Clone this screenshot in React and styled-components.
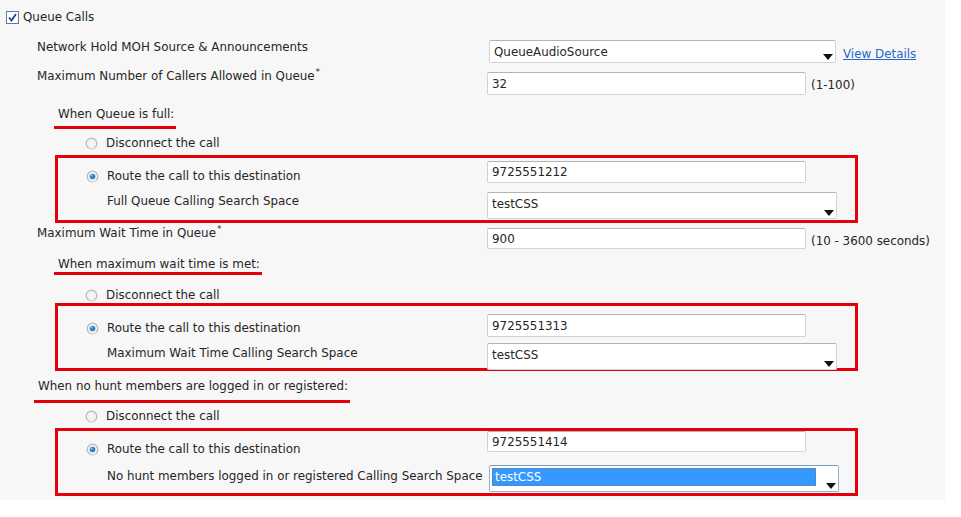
import React from 'react'
import styled, { createGlobalStyle } from 'styled-components'

const GlobalStyle = createGlobalStyle`
  body {
    margin: 0;
    background: #ffffff;
    font-family: "DejaVu Sans", Verdana, sans-serif;
    font-size: 11.9px;
    color: #262626;
  }
`

const RED = '#e3000b'

function Checkbox() {
  return (
    <svg width="13" height="13" viewBox="0 0 13 13">
      <rect x="0.5" y="0.5" width="12" height="12" fill="#fff" stroke="#5a7aa8" />
      <path d="M3 6.5 L5.5 9.5 L10 3" fill="none" stroke="#21409a" strokeWidth="1.8" />
    </svg>
  )
}

function Radio({ checked }) {
  return (
    <svg width="13" height="13" viewBox="0 0 13 13">
      <circle cx="6.5" cy="6.5" r="5.3" fill={checked ? '#eef2f6' : '#f4f4f4'} stroke="#b8b8b8" strokeWidth="1.2" />
      <path d="M3 9.5 A5 5 0 0 0 10 10" fill="none" stroke="#e6e6e6" strokeWidth="1.4" />
      {checked && <circle cx="6.5" cy="6.5" r="2.8" fill="#2d7fc4" />}
      {checked && <circle cx="5.6" cy="5.6" r="1" fill="#9fd0f5" />}
    </svg>
  )
}

function Arrow() {
  return (
    <svg width="10" height="6" viewBox="0 0 10 6">
      <path d="M0 0 L10 0 L5 6 Z" fill="#111" />
    </svg>
  )
}

export default function App() {
  return (
    <>
      <GlobalStyle />
      <Panel>
        <CheckLine>
          <Checkbox />
          <span>Queue Calls</span>
        </CheckLine>

        <Row $top={16} $col={487}>
          <Label $indent={37}>Network Hold MOH Source &amp; Announcements</Label>
          <Select $w={347} $h={23} $x={2}>
            QueueAudioSource
            <ArrowSpot><Arrow /></ArrowSpot>
          </Select>
          <Link href="#">View Details</Link>
        </Row>

        <Row $top={9} $col={487}>
          <Label $indent={37} $dy={-3}>Maximum Number of Callers Allowed in Queue<Star>*</Star></Label>
          <Input $h={23}>32</Input>
          <Hint>(1-100)</Hint>
        </Row>

        <Heading $top={12} $left={54} $under={5}>When Queue is full:</Heading>
        <RadioLine $top={7}>
          <Radio />
          <span>Disconnect the call</span>
        </RadioLine>

        <RedBox $top={5} $pad={3}>
          <Row $col={429}>
            <Label $indent={28} $dy={8}>
              <RadioLabel><Radio checked /><span>Route the call to this destination</span></RadioLabel>
            </Label>
            <Input $h={22}>9725551212</Input>
          </Row>
          <Row $top={9} $col={429}>
            <Label $indent={49} $dy={2}>Full Queue Calling Search Space</Label>
            <Select $w={350} $h={27}>
              testCSS
              <ArrowSpot><Arrow /></ArrowSpot>
            </Select>
          </Row>
        </RedBox>

        <Row $top={5} $col={487}>
          <Label $indent={37} $dy={-2}>Maximum Wait Time in Queue<Star>*</Star></Label>
          <Input $h={21}>900</Input>
          <Hint>(10 - 3600 seconds)</Hint>
        </Row>

        <Heading $top={8} $left={54} $under={1}>When maximum wait time is met:</Heading>
        <RadioLine $top={13}>
          <Radio />
          <span>Disconnect the call</span>
        </RadioLine>

        <RedBox $top={1} $pad={8}>
          <Row $col={429}>
            <Label $indent={28} $dy={7}>
              <RadioLabel><Radio checked /><span>Route the call to this destination</span></RadioLabel>
            </Label>
            <Input $h={23}>9725551313</Input>
          </Row>
          <Row $top={6} $col={429}>
            <Label $indent={49} $dy={3}>Maximum Wait Time Calling Search Space</Label>
            <Select $w={350} $h={27}>
              testCSS
              <ArrowSpot><Arrow /></ArrowSpot>
            </Select>
          </Row>
        </RedBox>

        <Heading $top={8} $left={34} $under={7}>When no hunt members are logged in or registered:</Heading>
        <RadioLine $top={6}>
          <Radio />
          <span>Disconnect the call</span>
        </RadioLine>

        <RedBox $top={5} $pad={0}>
          <Row $col={429}>
            <Label $indent={28} $dy={11}>
              <RadioLabel><Radio checked /><span>Route the call to this destination</span></RadioLabel>
            </Label>
            <Input $h={21}>9725551414</Input>
          </Row>
          <Row $top={9} $col={429}>
            <Label $indent={49} $dy={4}>No hunt members logged in or registered Calling Search Space</Label>
            <Select $w={350} $h={27} $x={2} $focus>
              <Selected>testCSS</Selected>
              <ArrowSpot><Arrow /></ArrowSpot>
            </Select>
          </Row>
        </RedBox>
      </Panel>
    </>
  )
}

const Panel = styled.div`
  width: 945px;
  height: 500px;
  background: #f7f7f7;
  display: flex;
  flex-direction: column;
  box-sizing: border-box;
  overflow: hidden;
`

const CheckLine = styled.div`
  display: flex;
  align-items: center;
  gap: 4px;
  height: 14px;
  margin-top: 10px;
  padding-left: 6px;
  line-height: 14px;
`

const Row = styled.div`
  display: grid;
  grid-template-columns: ${p => p.$col}px auto auto;
  justify-content: start;
  align-items: start;
  margin-top: ${p => p.$top || 0}px;
  line-height: 14px;
`

const Label = styled.div`
  padding-left: ${p => p.$indent}px;
  margin-top: ${p => p.$dy || 0}px;
  white-space: nowrap;
`

const Star = styled.sup`
  font-size: 9px;
  line-height: 0;
  margin-left: 1px;
`

const Input = styled.div`
  box-sizing: border-box;
  width: 319px;
  height: ${p => p.$h}px;
  padding: 0 4px;
  display: flex;
  align-items: center;
  background: #fff;
  border: 1px solid #d2d2d2;
  border-top-color: #b4b4b4;
  border-radius: 2px;
`

const Select = styled.div`
  position: relative;
  box-sizing: border-box;
  width: ${p => p.$w}px;
  height: ${p => p.$h}px;
  margin-left: ${p => p.$x || 0}px;
  padding: ${p => (p.$focus ? '2px 22px 0 2px' : '4px 4px 0 4px')};
  background: #fff;
  border: 1px solid ${p => (p.$focus ? '#8fb2d6' : '#d2d2d2')};
  border-top-color: ${p => (p.$focus ? '#7a9cc0' : '#b4b4b4')};
  border-radius: 2px;
`

const Selected = styled.div`
  height: 18px;
  line-height: 17px;
  padding-left: 2px;
  background: #3399ff;
  color: #fff;
  border: 1px solid #5b86b5;
  box-sizing: border-box;
`

const ArrowSpot = styled.span`
  position: absolute;
  right: 2px;
  bottom: 2px;
  display: flex;
`

const Link = styled.a`
  margin-left: 7px;
  margin-top: 7px;
  color: #2467c6;
  text-decoration: underline;
  white-space: nowrap;
`

const Hint = styled.span`
  margin-left: 5px;
  margin-top: 6px;
  white-space: nowrap;
`

const Heading = styled.div`
  align-self: flex-start;
  margin-top: ${p => p.$top}px;
  margin-left: ${p => p.$left}px;
  padding: 0 2px ${p => p.$under}px 4px;
  line-height: 14px;
  border-bottom: 3px solid ${RED};
  white-space: nowrap;
`

const RadioLine = styled.div`
  display: flex;
  align-items: center;
  gap: 8px;
  height: 14px;
  margin-top: ${p => p.$top}px;
  padding-left: 85px;
  line-height: 14px;
`

const RadioLabel = styled.span`
  display: flex;
  align-items: center;
  gap: 8px;
`

const RedBox = styled.div`
  box-sizing: border-box;
  width: 803px;
  height: 68px;
  margin-top: ${p => p.$top}px;
  margin-left: 55px;
  padding-top: ${p => p.$pad}px;
  border: 3px solid ${RED};
`
